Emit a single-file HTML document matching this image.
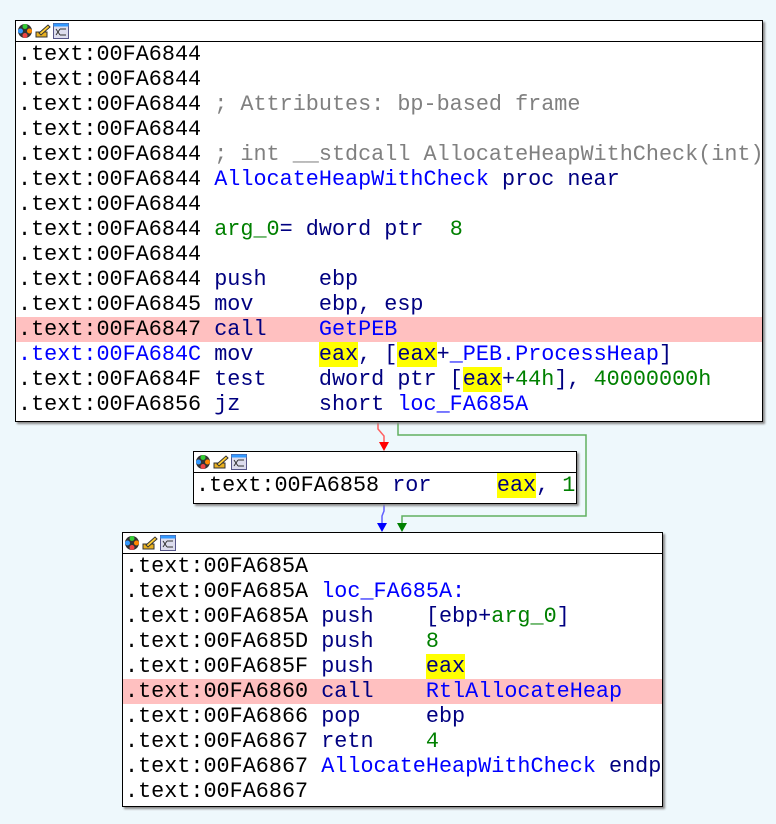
<!DOCTYPE html>
<html><head><style>
html,body{margin:0;padding:0;}
body{width:776px;height:824px;background:#eef8fc;position:relative;overflow:hidden;font-family:"Liberation Mono",monospace;}
.box{position:absolute;background:#fff;border:1px solid #000;box-shadow:2px 2px 2px #888;box-sizing:border-box;}
.hdr{height:20px;border-bottom:1px solid #000;position:relative;}
.ic{position:absolute;top:2px;width:16px;height:16px;}
.rows{font-size:21.8px;line-height:25px;color:#000;}
.r{padding-left:2px;height:25px;white-space:pre;}
.p{background:#ffc0c0;}
.m{color:#000080}.n{color:#0000ff}.c{color:#808080}.g{color:#008000}.y{background:#ffff00;color:#000080}
</style></head><body>
<svg width="776" height="824" style="position:absolute;left:0;top:0">
<polyline points="378,421 378,429 384,436 384,446" fill="none" stroke="#ff6060" stroke-width="1.5"/>
<polygon points="379,442 389,442 384,451" fill="#ff0000"/>
<polyline points="398,421 398,435 586,435 586,516 402,516 402,527" fill="none" stroke="#60b060" stroke-width="1.5"/>
<polygon points="397,523 407,523 402,532" fill="#008000"/>
<polyline points="384,503 384,511 382,516 382,527" fill="none" stroke="#6060ff" stroke-width="1.5"/>
<polygon points="377,523 387,523 382,532" fill="#0000ff"/>
</svg>
<div class="box" style="left:15px;top:20px;width:748px;height:402px">
<div class="hdr"><svg class="ic" style="left:1px" viewBox="0 0 16 16"><circle cx="8" cy="8" r="7" fill="#333"/><circle cx="8" cy="3.5" r="2.5" fill="#3c3"/><circle cx="12.5" cy="8" r="2.5" fill="#f80"/><circle cx="8" cy="12.5" r="2.5" fill="#e44"/><circle cx="3.5" cy="8" r="2.5" fill="#39f"/></svg><svg class="ic" style="left:19px" viewBox="0 0 16 16"><rect x="1" y="9" width="11" height="5" fill="#e9b020" stroke="#333"/><path d="M4 10 L13 2 L15 4 L6 12Z" fill="#fc3" stroke="#333"/></svg><svg class="ic" style="left:37px" viewBox="0 0 16 16"><rect x="0.5" y="0.5" width="15" height="15" fill="#dde" stroke="#558"/><rect x="0.5" y="0.5" width="15" height="3" fill="#39f"/><path d="M3 6 L7 12 M3 12 L7 6 M7 6 H13 M7 12 H13" stroke="#333" fill="none"/></svg></div>
<div class="rows">
<div class="r">.text:00FA6844</div>
<div class="r">.text:00FA6844</div>
<div class="r">.text:00FA6844 <span class="c">; Attributes: bp-based frame</span></div>
<div class="r">.text:00FA6844</div>
<div class="r">.text:00FA6844 <span class="c">; int __stdcall AllocateHeapWithCheck(int)</span></div>
<div class="r">.text:00FA6844 <span class="n">AllocateHeapWithCheck</span> <span class="m">proc near</span></div>
<div class="r">.text:00FA6844</div>
<div class="r">.text:00FA6844 <span class="g">arg_0</span><span class="m">= dword ptr </span> <span class="g">8</span></div>
<div class="r">.text:00FA6844</div>
<div class="r">.text:00FA6844 <span class="m">push    ebp</span></div>
<div class="r">.text:00FA6845 <span class="m">mov     ebp, esp</span></div>
<div class="r p">.text:00FA6847 <span class="m">call    </span><span class="n">GetPEB</span></div>
<div class="r"><span class="n">.text:00FA684C</span> <span class="m">mov     </span><span class="y">eax</span><span class="m">, [</span><span class="y">eax</span><span class="m">+</span><span class="n">_PEB.ProcessHeap</span><span class="m">]</span></div>
<div class="r">.text:00FA684F <span class="m">test    dword ptr [</span><span class="y">eax</span><span class="m">+</span><span class="g">44h</span><span class="m">], </span><span class="g">40000000h</span></div>
<div class="r">.text:00FA6856 <span class="m">jz      short </span><span class="n">loc_FA685A</span></div>
</div></div>

<div class="box" style="left:193px;top:451px;width:384px;height:53px">
<div class="hdr"><svg class="ic" style="left:1px" viewBox="0 0 16 16"><circle cx="8" cy="8" r="7" fill="#333"/><circle cx="8" cy="3.5" r="2.5" fill="#3c3"/><circle cx="12.5" cy="8" r="2.5" fill="#f80"/><circle cx="8" cy="12.5" r="2.5" fill="#e44"/><circle cx="3.5" cy="8" r="2.5" fill="#39f"/></svg><svg class="ic" style="left:19px" viewBox="0 0 16 16"><rect x="1" y="9" width="11" height="5" fill="#e9b020" stroke="#333"/><path d="M4 10 L13 2 L15 4 L6 12Z" fill="#fc3" stroke="#333"/></svg><svg class="ic" style="left:37px" viewBox="0 0 16 16"><rect x="0.5" y="0.5" width="15" height="15" fill="#dde" stroke="#558"/><rect x="0.5" y="0.5" width="15" height="3" fill="#39f"/><path d="M3 6 L7 12 M3 12 L7 6 M7 6 H13 M7 12 H13" stroke="#333" fill="none"/></svg></div>
<div class="rows"><div class="r">.text:00FA6858 <span class="m">ror     </span><span class="y">eax</span><span class="m">, </span><span class="g">1</span></div></div>
</div>

<div class="box" style="left:122px;top:532px;width:541px;height:275px">
<div class="hdr"><svg class="ic" style="left:1px" viewBox="0 0 16 16"><circle cx="8" cy="8" r="7" fill="#333"/><circle cx="8" cy="3.5" r="2.5" fill="#3c3"/><circle cx="12.5" cy="8" r="2.5" fill="#f80"/><circle cx="8" cy="12.5" r="2.5" fill="#e44"/><circle cx="3.5" cy="8" r="2.5" fill="#39f"/></svg><svg class="ic" style="left:19px" viewBox="0 0 16 16"><rect x="1" y="9" width="11" height="5" fill="#e9b020" stroke="#333"/><path d="M4 10 L13 2 L15 4 L6 12Z" fill="#fc3" stroke="#333"/></svg><svg class="ic" style="left:37px" viewBox="0 0 16 16"><rect x="0.5" y="0.5" width="15" height="15" fill="#dde" stroke="#558"/><rect x="0.5" y="0.5" width="15" height="3" fill="#39f"/><path d="M3 6 L7 12 M3 12 L7 6 M7 6 H13 M7 12 H13" stroke="#333" fill="none"/></svg></div>
<div class="rows">
<div class="r">.text:00FA685A</div>
<div class="r">.text:00FA685A <span class="n">loc_FA685A:</span></div>
<div class="r">.text:00FA685A <span class="m">push    [ebp+</span><span class="g">arg_0</span><span class="m">]</span></div>
<div class="r">.text:00FA685D <span class="m">push    </span><span class="g">8</span></div>
<div class="r">.text:00FA685F <span class="m">push    </span><span class="y">eax</span></div>
<div class="r p">.text:00FA6860 <span class="m">call    </span><span class="n">RtlAllocateHeap</span></div>
<div class="r">.text:00FA6866 <span class="m">pop     ebp</span></div>
<div class="r">.text:00FA6867 <span class="m">retn    </span><span class="g">4</span></div>
<div class="r">.text:00FA6867 <span class="n">AllocateHeapWithCheck</span> <span class="m">endp</span></div>
<div class="r">.text:00FA6867</div>
</div></div>
</body></html>
